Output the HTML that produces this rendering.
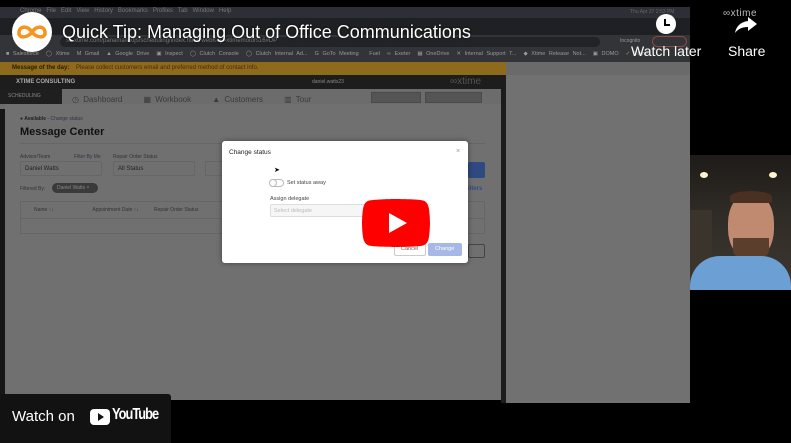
<!DOCTYPE html>
<html><head><style>
*{margin:0;padding:0;box-sizing:border-box}
body{width:791px;height:443px;background:#000;position:relative;overflow:hidden;font-family:"Liberation Sans",sans-serif}
.a{position:absolute}
.t{white-space:nowrap}
</style></head><body>
<!-- browser chrome -->
<div class="a" style="left:0;top:7px;width:690px;height:11px;background:#2c2f36"></div>
<div class="a t" style="left:20px;top:8px;font-size:6px;color:#777">Chrome&nbsp;&nbsp;&nbsp;File&nbsp;&nbsp;&nbsp;Edit&nbsp;&nbsp;&nbsp;View&nbsp;&nbsp;&nbsp;History&nbsp;&nbsp;&nbsp;Bookmarks&nbsp;&nbsp;&nbsp;Profiles&nbsp;&nbsp;&nbsp;Tab&nbsp;&nbsp;&nbsp;Window&nbsp;&nbsp;&nbsp;Help</div>
<div class="a t" style="left:630px;top:9px;font-size:5px;color:#666">Thu Apr 27 2:53 PM</div>
<div class="a" style="left:0;top:18px;width:690px;height:17px;background:#1f2023"></div>
<div class="a" style="left:0;top:35px;width:690px;height:13px;background:#333438"></div>
<div class="a" style="left:60px;top:37px;width:540px;height:10px;background:#222327;border-radius:5px"></div>
<div class="a t" style="left:66px;top:38px;font-size:6px;color:#777">s5.xtime.com/panama/extjs/scheduling/index.html?webKey=xtimemotors16#DP</div>
<div class="a t" style="left:620px;top:38px;font-size:5px;color:#999">Incognito</div>
<div class="a" style="left:652px;top:36px;width:35px;height:11px;border:1px solid #8a4a40;border-radius:6px"></div>
<div class="a" style="left:0;top:48px;width:690px;height:14px;background:#333438"></div>
<div class="a t" style="left:6px;top:51px;font-size:5.5px;color:#999;word-spacing:2px">■ Salesforce &nbsp;◯ Xtime &nbsp;M Gmail &nbsp;▲ Google Drive &nbsp;▣ Inspect &nbsp;◯ Clutch Console &nbsp;◯ Clutch Internal Ad... &nbsp;G GoTo Meeting &nbsp;&nbsp;Fuel &nbsp;∞ Exeter &nbsp;▦ OneDrive &nbsp;✕ Internal Support T... &nbsp;◆ Xtime Release Not... &nbsp;▣ DOMO &nbsp;✓ Xtime</div>
<!-- message bar -->
<div class="a" style="left:0;top:62px;width:506px;height:13px;background:#8d6a1c"></div>
<div class="a t" style="left:12px;top:65px;font-size:6px;color:#2a1e05"><b>Message of the day:</b>&nbsp;&nbsp;&nbsp;&nbsp;<span style="color:#4a2a10">Please collect customers email and preferred method of contact info.</span></div>
<div class="a" style="left:506px;top:62px;width:184px;height:13px;background:#6a6a6a"></div>
<div class="a" style="left:0;top:75px;width:506px;height:14px;background:#1d1d1d"></div>
<div class="a t" style="left:16px;top:79px;font-size:6px;color:#aaa;font-weight:bold">XTIME CONSULTING</div>
<div class="a t" style="left:312px;top:79px;font-size:5px;color:#888">daniel.watts23</div>
<div class="a t" style="left:450px;top:76px;font-size:10px;color:#555">∞xtime</div>
<div class="a" style="left:0;top:89px;width:506px;height:20px;background:#6c6c6c"></div>
<div class="a" style="left:0;top:89px;width:62px;height:15px;background:#1f1f1f"></div>
<div class="a t" style="left:8px;top:93px;font-size:5px;color:#888">SCHEDULING</div>
<div class="a t" style="left:72px;top:95px;font-size:8px;color:#3a3a3a;word-spacing:2px">◷ Dashboard &nbsp;&nbsp;&nbsp; ▦ Workbook &nbsp;&nbsp;&nbsp; ▲ Customers &nbsp;&nbsp;&nbsp; ▥ Tour</div>
<div class="a" style="left:371px;top:92px;width:50px;height:11px;background:#555;border:1px solid #4a4a4a"></div>
<div class="a" style="left:425px;top:92px;width:57px;height:11px;background:#555;border:1px solid #4a4a4a"></div>
<!-- content -->
<div class="a" style="left:0;top:109px;width:5px;height:295px;background:#161616"></div>
<div class="a" style="left:5px;top:104px;width:496px;height:296px;background:#707070"></div>
<div class="a" style="left:501px;top:75px;width:5px;height:328px;background:#1c1c1c"></div>
<div class="a" style="left:506px;top:75px;width:184px;height:328px;background:#717171"></div>
<div class="a t" style="left:20px;top:116px;font-size:5px;color:#222"><b>● Available</b> - <span style="color:#334">Change status</span></div>
<div class="a t" style="left:20px;top:126px;font-size:11px;color:#111;font-weight:bold">Message Center</div>
<div class="a" style="left:20px;top:143px;width:465px;height:1px;background:#666"></div>
<div class="a t" style="left:20px;top:154px;font-size:5px;color:#333">Advisor/Team</div>
<div class="a t" style="left:74px;top:154px;font-size:5px;color:#334">Filter By Me</div>
<div class="a t" style="left:113px;top:154px;font-size:5px;color:#333">Repair Order Status</div>
<div class="a" style="left:20px;top:161px;width:82px;height:15px;border:1px solid #666;border-radius:2px"></div>
<div class="a t" style="left:25px;top:166px;font-size:6px;color:#222">Daniel Watts</div>
<div class="a" style="left:113px;top:161px;width:82px;height:15px;border:1px solid #666;border-radius:2px"></div>
<div class="a t" style="left:118px;top:166px;font-size:6px;color:#222">All Status</div>
<div class="a" style="left:205px;top:161px;width:20px;height:15px;border:1px solid #666"></div>
<div class="a t" style="left:20px;top:186px;font-size:5px;color:#333">Filtered By:</div>
<div class="a" style="left:52px;top:183px;width:46px;height:10px;background:#3a3a3a;border-radius:5px"></div>
<div class="a t" style="left:57px;top:185px;font-size:5px;color:#888">Daniel Watts ×</div>
<div class="a" style="left:468px;top:162px;width:17px;height:16px;background:#2f4a80;border-radius:2px"></div>
<div class="a t" style="left:466px;top:186px;font-size:6px;color:#334d80;font-weight:bold">filters</div>
<div class="a" style="left:20px;top:201px;width:465px;height:33px;border:1px solid #666"></div>
<div class="a" style="left:20px;top:218px;width:465px;height:1px;background:#666"></div>
<div class="a t" style="left:34px;top:207px;font-size:5px;color:#333">Name ↑↓ &nbsp;&nbsp;&nbsp;&nbsp;&nbsp;&nbsp;&nbsp;&nbsp;&nbsp;&nbsp;&nbsp;&nbsp;&nbsp;&nbsp;&nbsp;&nbsp;&nbsp;&nbsp;&nbsp;&nbsp;&nbsp;&nbsp;&nbsp;&nbsp;&nbsp;&nbsp; Appointment Date ↑↓ &nbsp;&nbsp;&nbsp;&nbsp;&nbsp;&nbsp;&nbsp;&nbsp;&nbsp; Repair Order Status</div>
<div class="a" style="left:468px;top:244px;width:17px;height:14px;border:1px solid #444;border-radius:2px"></div>
<!-- dialog -->
<div class="a" style="left:222px;top:141px;width:246px;height:122px;background:#fff;border-radius:3px;box-shadow:0 0 6px rgba(0,0,0,.4)"></div>
<div class="a t" style="left:229px;top:149px;font-size:6.5px;color:#222">Change status</div>
<div class="a t" style="left:456px;top:148px;font-size:7px;color:#999">×</div>
<div class="a t" style="left:274px;top:166px;font-size:7px;color:#000">➤</div>
<div class="a" style="left:269px;top:179px;width:15px;height:8px;border:1px solid #bbb;border-radius:4px"></div>
<div class="a" style="left:269px;top:179px;width:8px;height:8px;border:1px solid #bbb;border-radius:50%;background:#fff"></div>
<div class="a t" style="left:287px;top:180px;font-size:5.5px;color:#444">Set status away</div>
<div class="a t" style="left:270px;top:196px;font-size:5.5px;color:#444">Assign delegate</div>
<div class="a" style="left:270px;top:204px;width:100px;height:13px;border:1px solid #ddd;background:#f6f6f6;border-radius:2px"></div>
<div class="a t" style="left:274px;top:208px;font-size:5.5px;color:#bbb">Select delegate</div>
<div class="a" style="left:394px;top:243px;width:32px;height:13px;border:1px solid #ccc;border-radius:2px"></div>
<div class="a t" style="left:401px;top:246px;font-size:5.5px;color:#666">Cancel</div>
<div class="a" style="left:428px;top:243px;width:34px;height:13px;background:#a6b9e6;border-radius:2px"></div>
<div class="a t" style="left:435px;top:246px;font-size:5.5px;color:#fff">Change</div>
<!-- play button -->
<svg class="a" style="left:362px;top:199px" width="68" height="48" viewBox="0 0 68 48"><path d="M66.5 7.7c-.8-2.9-2.5-5.4-5.4-6.2C55.8.1 34 0 34 0S12.2.1 6.9 1.6c-3 .7-4.6 3.2-5.4 6.1C.1 13 0 24 0 24s.1 11 1.5 16.3c.8 2.9 2.5 5.4 5.4 6.2C12.2 47.9 34 48 34 48s21.8-.1 27.1-1.5c2.9-.8 4.6-3.3 5.4-6.2C67.9 35 68 24 68 24s-.1-11-1.5-16.3z" fill="#f00"/><path d="M45 24 27 14v20" fill="#fff"/></svg>
<!-- webcam -->
<div class="a" style="left:690px;top:155px;width:101px;height:135px;background:linear-gradient(#1e1b18,#2e2a25 40%,#3d3831)"></div>
<div class="a" style="left:690px;top:210px;width:22px;height:55px;background:#3a342c"></div>
<div class="a" style="left:700px;top:172px;width:8px;height:6px;border-radius:50%;background:#fff4d0"></div>
<div class="a" style="left:769px;top:172px;width:8px;height:6px;border-radius:50%;background:#fff4d0"></div>
<div class="a" style="left:728px;top:193px;width:46px;height:66px;border-radius:45%;background:#c08a70"></div>
<div class="a" style="left:730px;top:191px;width:42px;height:12px;border-radius:50% 50% 10% 10%;background:#4a3020"></div>
<div class="a" style="left:733px;top:238px;width:36px;height:22px;border-radius:0 0 45% 45%;background:#5c3e2c"></div>
<div class="a" style="left:690px;top:256px;width:101px;height:34px;background:#6c9fd4;border-radius:30px 30px 0 0"></div>
<!-- overlays -->
<div class="a" style="left:12px;top:12px;width:40px;height:40px;border-radius:50%;background:#fff"></div>
<svg class="a" style="left:16px;top:24px" width="32" height="16" viewBox="0 0 32 16"><path d="M16 8C12 2 4 1 3 8s9 6 13 0c4-6 12-7 13 0s-9 6-13 0" fill="none" stroke="#f7941d" stroke-width="3.5"/></svg>
<div class="a t" style="left:62px;top:22px;font-size:18px;color:#fff;text-shadow:0 0 2px #000">Quick Tip: Managing Out of Office Communications</div>
<svg class="a" style="left:656px;top:14px" width="20" height="20"><circle cx="10" cy="10" r="10" fill="#fff"/><path d="M9 5v6h5" stroke="#000" stroke-width="2" fill="none"/></svg>
<div class="a t" style="left:631px;top:43px;font-size:14px;color:#fff">Watch later</div>
<div class="a t" style="left:723px;top:8px;font-size:10px;color:#bbb;letter-spacing:.5px">∞xtime</div>
<svg class="a" style="left:735px;top:17px" width="22" height="16"><path d="M22 7 13 0v4C5 5 1 10 0 16c3-4 7-6 13-6v4z" fill="#fff"/></svg>
<div class="a t" style="left:728px;top:43px;font-size:14px;color:#fff">Share</div>
<div class="a" style="left:0;top:394px;width:171px;height:49px;background:#121212;border-radius:0 3px 0 0"></div>
<div class="a t" style="left:12px;top:408px;font-size:15px;color:#fff">Watch on</div>
<div class="a" style="left:90px;top:409px;width:20px;height:16px;background:#fff;border-radius:4px"></div>
<svg class="a" style="left:97px;top:413px" width="8" height="8"><path d="M1 0 7 4 1 8z" fill="#121212"/></svg>
<div class="a t" style="left:112px;top:406px;font-size:16px;color:#fff;font-weight:bold;letter-spacing:-1.2px;transform:scaleX(.8);transform-origin:left">YouTube</div>
</body></html>
